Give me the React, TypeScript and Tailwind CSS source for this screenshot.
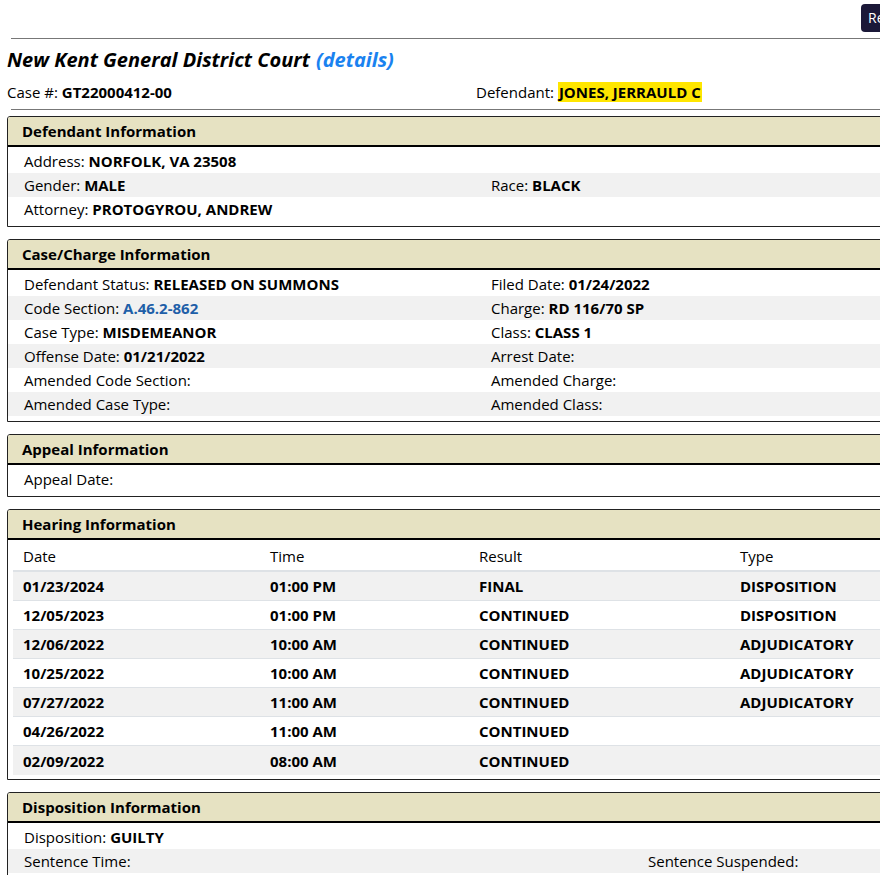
import React from 'react';

type Field = { label: string; value?: string; link?: boolean };

const Row = ({ cols, gray, grid }: { cols: (Field | null)[]; gray?: boolean; grid: string }) => (
  <div className={`grid ${grid} h-6 items-center pl-4 ${gray ? 'bg-[#f1f1f1]' : 'bg-white'}`}>
    {cols.map((c, i) => (
      <div key={i} className="whitespace-nowrap">
        {c && (
          <>
            {c.label}:{' '}
            {c.value && (
              <span className={`font-bold ${c.link ? 'text-[#1f5fa8]' : ''}`}>{c.value}</span>
            )}
          </>
        )}
      </div>
    ))}
  </div>
);

const Section = ({ title, children, pad = true }: { title: string; children: React.ReactNode; pad?: boolean }) => (
  <div className="ml-[7px] border border-[#222] rounded-tl-[3px] overflow-hidden">
    <div className="h-[30px] bg-[#e6e2c2] border-b-2 border-black px-[14px] flex items-center font-bold">{title}</div>
    <div className={pad ? 'pt-[2px] pb-[5px]' : ''}>{children}</div>
  </div>
);

const two = 'grid-cols-[467px_1fr]';
const three = 'grid-cols-[312px_312px_1fr]';

const hearings = [
  ['01/23/2024', '01:00 PM', 'FINAL', 'DISPOSITION'],
  ['12/05/2023', '01:00 PM', 'CONTINUED', 'DISPOSITION'],
  ['12/06/2022', '10:00 AM', 'CONTINUED', 'ADJUDICATORY'],
  ['10/25/2022', '10:00 AM', 'CONTINUED', 'ADJUDICATORY'],
  ['07/27/2022', '11:00 AM', 'CONTINUED', 'ADJUDICATORY'],
  ['04/26/2022', '11:00 AM', 'CONTINUED', ''],
  ['02/09/2022', '08:00 AM', 'CONTINUED', ''],
];

const hcols = 'grid-cols-[247px_209px_261px_1fr]';

export default function App() {
  return (
    <div className="w-[880px] h-[875px] overflow-hidden bg-white text-black text-[15px] leading-6" style={{ fontFamily: '"Open Sans", "Noto Sans", sans-serif' }}>
      <div className="w-[975px]">
        <div className="h-[38px] pt-1">
          <button className="ml-[861px] h-[28px] w-[19px] overflow-hidden bg-[#1b1838] text-white rounded-l-[4px] text-[14px] text-left pl-[7px] whitespace-nowrap">Re</button>
        </div>
        <div className="ml-[11px] border-t border-[#777]" />
        <div className="pl-[7px] pt-[8px] h-[34px] flex items-center text-[20px] font-bold italic">
          New Kent General District Court <span className="text-[#1a82f0] ml-[6px]">(details)</span>
        </div>
        <div className="grid grid-cols-[469px_1fr] pl-[7px] mt-[5px] h-[28px] items-center">
          <div>Case #: <span className="font-bold">GT22000412-00</span></div>
          <div>
            Defendant: <span className="font-bold bg-[#ffe600] px-px">JONES, JERRAULD C</span>
          </div>
        </div>
        <div className="ml-[11px] mt-[3px] border-t border-[#777] mb-[6px]" />

        <div className="flex flex-col gap-[12px]">
          <Section title="Defendant Information">
            <Row grid={two} cols={[{ label: 'Address', value: 'NORFOLK, VA 23508' }, null]} />
            <Row grid={two} gray cols={[{ label: 'Gender', value: 'MALE' }, { label: 'Race', value: 'BLACK' }]} />
            <Row grid={two} cols={[{ label: 'Attorney', value: 'PROTOGYROU, ANDREW' }, null]} />
          </Section>

          <Section title="Case/Charge Information">
            <Row grid={two} cols={[{ label: 'Defendant Status', value: 'RELEASED ON SUMMONS' }, { label: 'Filed Date', value: '01/24/2022' }]} />
            <Row grid={two} gray cols={[{ label: 'Code Section', value: 'A.46.2-862', link: true }, { label: 'Charge', value: 'RD 116/70 SP' }]} />
            <Row grid={two} cols={[{ label: 'Case Type', value: 'MISDEMEANOR' }, { label: 'Class', value: 'CLASS 1' }]} />
            <Row grid={two} gray cols={[{ label: 'Offense Date', value: '01/21/2022' }, { label: 'Arrest Date' }]} />
            <Row grid={two} cols={[{ label: 'Amended Code Section' }, { label: 'Amended Charge' }]} />
            <Row grid={two} gray cols={[{ label: 'Amended Case Type' }, { label: 'Amended Class' }]} />
          </Section>

          <Section title="Appeal Information">
            <Row grid={two} cols={[{ label: 'Appeal Date' }, null]} />
          </Section>

          <Section title="Hearing Information" pad={false}>
            <div className="px-[5px] pb-[4px]">
              <div className={`grid ${hcols} h-[32px] pt-[2px] items-center pl-[10px] border-b-2 border-[#dee2e6]`}>
                <div>Date</div>
                <div>Time</div>
                <div>Result</div>
                <div>Type</div>
              </div>
              {hearings.map((h, i) => (
                <div
                  key={i}
                  className={`grid ${hcols} h-[29px] items-center pl-[10px] font-bold ${i % 2 === 0 ? 'bg-[#f1f1f1]' : 'bg-white'} ${i < hearings.length - 1 ? 'border-b border-[#dee2e6]' : ''}`}
                >
                  {h.map((v, j) => (
                    <div key={j}>{v}</div>
                  ))}
                </div>
              ))}
            </div>
          </Section>

          <Section title="Disposition Information">
            <Row grid={three} cols={[{ label: 'Disposition', value: 'GUILTY' }, null, null]} />
            <Row grid={three} gray cols={[{ label: 'Sentence Time' }, null, { label: 'Sentence Suspended' }]} />
          </Section>
        </div>
      </div>
    </div>
  );
}
